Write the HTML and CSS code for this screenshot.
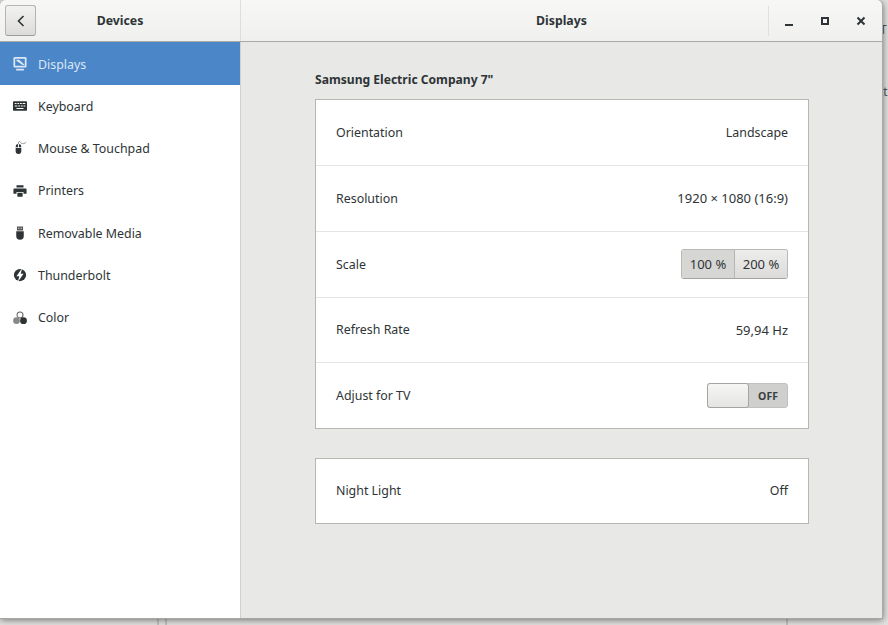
FILE: index.html
```html
<!DOCTYPE html>
<html lang="en">
<head>
<meta charset="utf-8">
<title>Displays</title>
<link rel="stylesheet" href="styles.css">
</head>
<body>
<div class="desktop">
  <div class="peek peek-t">T</div>
  <div class="peek peek-x">xt</div>
  <div class="seam seam-a"></div>
  <div class="seam seam-b"></div>
  <div class="seam seam-c"></div>
  <div class="window">
    <header class="titlebar">
      <div class="title-left">
        <button class="back" aria-label="Back">
          <svg viewBox="0 0 16 16" width="16" height="16"><path d="M10.500 3 5.500 8l5 5" fill="none" stroke="#2e3436" stroke-width="1.600"/></svg>
        </button>
        <span class="title-text">Devices</span>
      </div>
      <div class="title-main">
        <span class="title-text">Displays</span>
        <div class="controls">
          <svg class="ctl" viewBox="0 0 16 16" width="16" height="16"><rect x="4" y="11" width="8" height="2" fill="#2e3436"/></svg>
          <svg class="ctl" viewBox="0 0 16 16" width="16" height="16"><rect x="5" y="5" width="6" height="6" fill="none" stroke="#2e3436" stroke-width="2"/></svg>
          <svg class="ctl" viewBox="0 0 16 16" width="16" height="16"><path d="M4.500 4.500l7 7M11.500 4.500l-7 7" stroke="#2e3436" stroke-width="2" fill="none"/></svg>
        </div>
      </div>
    </header>
    <div class="body">
      <nav class="sidebar">
        <a class="item selected">
          <svg class="icon" viewBox="0 0 16 16"><path fill-rule="evenodd" d="M2 0h12a1.500 1.500 0 0 1 1.500 1.500v9A1.500 1.500 0 0 1 14 12H2a1.500 1.500 0 0 1-1.500-1.500v-9A1.500 1.500 0 0 1 2 0zm.500 2v8h11V2z" fill="#dbe7f4"/><path d="M4 3h3l6 5.500V9h-2L4 4.500z" fill="#dbe7f4"/><rect x="3.500" y="13.500" width="9" height="1.800" rx=".5" fill="#dbe7f4"/></svg>
          <span>Displays</span>
        </a>
        <a class="item">
          <svg class="icon" viewBox="0 0 16 16"><path fill-rule="evenodd" d="M1 2.500h14a1 1 0 0 1 1 1v9a1 1 0 0 1-1 1H1a1 1 0 0 1-1-1v-9a1 1 0 0 1 1-1zm1 2v1.200h2V4.500zm3 0v1.200h2V4.500zm3 0v1.200h2V4.500zm3 0v1.200h3V4.500zM2 7.300v1.200h3V7.300zm4 0v1.200h2V7.300zm3 0v1.200h2V7.300zm3 0v1.200h2V7.300zM4 10.200v1.300h8v-1.300z" fill="#2e3436"/></svg>
          <span>Keyboard</span>
        </a>
        <a class="item">
          <svg class="icon" viewBox="0 0 16 16"><path d="M3 6.500a3 3 0 0 1 2.700-3V7H3zM6.800 3.500a3 3 0 0 1 2.700 3V7H6.800zM3 8h6.500v3.500a3.250 3.250 0 0 1-6.500 0z" fill="#2e3436"/><path d="M6.200 3.500V2c0-1.500 1.800-2 2.500-.5S12 4 15 1.500" fill="none" stroke="#777" stroke-width=".9"/></svg>
          <span>Mouse &amp; Touchpad</span>
        </a>
        <a class="item">
          <svg class="icon" viewBox="0 0 16 16"><path d="M4 1.500h8v2.500H4zM1.500 5h13a1 1 0 0 1 1 1v5H12V9H4v2H.500V6a1 1 0 0 1 1-1zM5 10h6v4.500H5z" fill="#2e3436"/></svg>
          <span>Printers</span>
        </a>
        <a class="item">
          <svg class="icon" viewBox="0 0 16 16"><path fill-rule="evenodd" d="M4.500 .500h7v4.500h-7zm1.500 1.500v1.200h1.200V2zm2.800 0v1.200H10V2z" fill="#555"/><path d="M3.700 6h8.600v5.500a4.300 4.300 0 0 1-8.600 0z" fill="#2e3436"/></svg>
          <span>Removable Media</span>
        </a>
        <a class="item">
          <svg class="icon" viewBox="0 0 16 16"><circle cx="8" cy="8" r="7" fill="#2e3436"/><path d="M10.500 0 4 9.500h3.200L5.500 16l6.500-9.500H8.800z" fill="#fff"/></svg>
          <span>Thunderbolt</span>
        </a>
        <a class="item">
          <svg class="icon" viewBox="0 0 16 16"><circle cx="8" cy="4.500" r="3.400" fill="none" stroke="#666" stroke-width="1.200"/><circle cx="4" cy="11" r="3.800" fill="#888"/><circle cx="12" cy="11" r="3.900" fill="#2e3436"/></svg>
          <span>Color</span>
        </a>
      </nav>
      <main class="content">
        <h2 class="heading">Samsung Electric Company 7"</h2>
        <section class="panel">
          <div class="row"><span>Orientation</span><span>Landscape</span></div>
          <div class="row"><span>Resolution</span><span class="num">1920 × 1080 (16:9)</span></div>
          <div class="row"><span>Scale</span>
            <div class="seg"><span class="seg-btn active">100 %</span><span class="seg-btn">200 %</span></div>
          </div>
          <div class="row"><span>Refresh Rate</span><span class="num">59,94 Hz</span></div>
          <div class="row"><span>Adjust for TV</span>
            <div class="switch"><span class="knob"></span><span class="off">OFF</span></div>
          </div>
        </section>
        <section class="panel night">
          <div class="row"><span>Night Light</span><span>Off</span></div>
        </section>
      </main>
    </div>
  </div>
</div>
</body>
</html>
```
FILE: styles.css
```css
* { box-sizing: border-box; }
html, body { margin: 0; padding: 0; }
body {
  width: 888px;
  height: 625px;
  overflow: hidden;
  font-family: "Noto Sans", sans-serif;
  font-size: 12.400px;
  color: #2e3436;
  background: #dcdcda;
}
.desktop { position: relative; width: 888px; height: 625px; overflow: hidden; background: #e2e2e0; }
.peek { position: absolute; color: #555; font-size: 12px; line-height: 14px; }
.peek-t { left: 880px; top: 23px; }
.peek-x { left: 877px; top: 85px; }
.seam { position: absolute; background: rgba(0,0,0,.14); }
.seam-a { left: 157px; top: 615px; width: 2px; height: 10px; }
.seam-b { left: 165px; top: 615px; width: 2px; height: 10px; }
.seam-c { left: 786px; top: 615px; width: 2px; height: 10px; }
.window {
  position: relative;
  width: 883px;
  height: 619px;
  display: flex;
  flex-direction: column;
  background: #e8e8e6;
  border-radius: 6px 6px 0 0;
  border-right: 1px solid #a9a9a7;
  border-bottom: 1px solid #a5a5a3;
  box-shadow: 0 1px 7px rgba(0,0,0,.5);
  overflow: hidden;
}
.titlebar {
  height: 42px;
  flex: none;
  display: flex;
  background: linear-gradient(#f7f7f6, #f0f0ee);
  border-bottom: 1px solid #a9a9a6;
}
.title-left {
  width: 241px;
  flex: none;
  display: flex;
  align-items: center;
  position: relative;
  justify-content: center;
  border-right: 1px solid #dedede;
}
.title-text { font-weight: 700; font-size: 12.300px; color: #2e3436; }
.back {
  position: absolute;
  left: 5px;
  top: 5px;
  width: 31px;
  height: 31px;
  padding: 0;
  display: flex;
  align-items: center;
  justify-content: center;
  background: linear-gradient(#f2f2f0, #dedcda);
  border: 1px solid #b4b4b0;
  border-bottom-color: #9c9c98;
  border-radius: 3px;
}
.title-main {
  flex: 1;
  display: flex;
  align-items: center;
  justify-content: center;
  position: relative;
}
.controls {
  position: absolute;
  right: 0;
  top: 6px;
  height: 30px;
  width: 114px;
  padding-left: 12px;
  padding-right: 13px;
  border-left: 1px solid #e0e0de;
  display: flex;
  align-items: center;
  justify-content: space-between;
}
.body { flex: 1; display: flex; min-height: 0; }
.sidebar {
  width: 241px;
  flex: none;
  background: #fff;
  border-right: 1px solid #d0d0ce;
  display: flex;
  flex-direction: column;
}
.item {
  height: 42.330px;
  display: flex;
  align-items: center;
  gap: 11px;
  padding-left: 13px;
  color: #2e3436;
}
.item.selected { height: 43px; padding-top: 1px; background: #4a86c8; color: #dbe7f4; }
.icon { width: 14px; height: 14px; flex: none; }
.content {
  flex: 1;
  display: flex;
  flex-direction: column;
  padding: 29px 73px 0 74px;
}
.heading {
  margin: 0 0 10px;
  font-size: 12.100px;
  line-height: 18px;
  font-weight: 700;
  color: #2e3436;
}
.panel {
  background: #fff;
  border: 1px solid #b6b6b3;
}
.night { margin-top: 29px; }
.row {
  height: 66px;
  display: flex;
  align-items: center;
  justify-content: space-between;
  padding: 0 20px;
  border-bottom: 1px solid #e4e4e2;
}
.row > span { margin-bottom: 1px; }
.row:nth-child(4) { height: 65px; }
.row:last-child { border-bottom: 0; height: 65px; }
.night .row { height: 64px; }
.num { font-size: 13px; }
.seg { display: flex; height: 30px; margin-bottom: 2px; border: 1px solid #b9b9b5; border-bottom-color: #a3a3a0; border-radius: 3px; overflow: hidden; font-size: 13px; }
.seg-btn {
  width: 52px;
  display: flex;
  align-items: center;
  justify-content: center;
  background: linear-gradient(#ededeb, #dcdbd9);
}
.seg-btn.active { width: 53px; background: #d6d6d4; border-right: 1px solid #b6b6b2; }
.switch {
  width: 81px;
  height: 25px;
  display: flex;
  border-radius: 3px;
  border: 1px solid #c0c0bc;
  background: #cfcfcd;
  align-items: stretch;
}
.knob {
  width: 42px;
  margin: -1px 0 -1px -1px;
  background: linear-gradient(#f6f6f5, #e4e4e2);
  border: 1px solid #a4a4a1;
  border-radius: 3px;
}
.off {
  flex: 1;
  display: flex;
  align-items: center;
  justify-content: center;
  font-weight: 700;
  font-size: 10.500px;
  color: #3a3f40;
}
```
